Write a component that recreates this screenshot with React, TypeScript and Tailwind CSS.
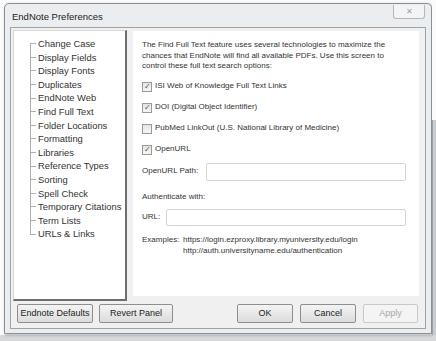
import React from 'react';

const items = [
    'Change Case',
    'Display Fields',
    'Display Fonts',
    'Duplicates',
    'EndNote Web',
    'Find Full Text',
    'Folder Locations',
    'Formatting',
    'Libraries',
    'Reference Types',
    'Sorting',
    'Spell Check',
    'Temporary Citations',
    'Term Lists',
    'URLs & Links',
];

function Check({ checked, label }: { checked: boolean; label: string }) {
    return (
        <div className="flex items-center gap-[3px] h-[12px]">
            <span className="w-[10px] h-[10px] border border-[#9a9a9a] bg-gradient-to-b from-[#e4e4e4] to-[#f6f6f6] flex items-center justify-center text-[8px] leading-none text-[#555]">
                {checked ? '✓' : ''}
            </span>
            <span>{label}</span>
        </div>
    );
}

function Btn({ label, w, disabled }: { label: string; w: string; disabled?: boolean }) {
    return (
        <div
            className={`${w} h-[19px] border rounded-[2px] flex items-center justify-center text-[9px] ${
                disabled
                    ? 'border-[#c8c8c8] bg-[#f4f4f4] text-[#a8a8a8]'
                    : 'border-[#8e8e8e] bg-gradient-to-b from-[#f4f4f4] to-[#dcdcdc] text-[#222]'
            }`}
        >
            {label}
        </div>
    );
}

export default function App() {
    return (
        <div className="w-[436px] h-[341px] bg-[#d6d8da] overflow-hidden relative" style={{ fontFamily: '"Liberation Sans", Arial, sans-serif' }}>
            <div className="flex h-[335px] bg-[#fbfbfb]">
                <div className="ml-[4px] mt-[3px] w-[428px] h-[331px] border border-[#8c8f92] rounded-t-[5px] bg-[#ebeef1] flex flex-col shadow-[1px_1px_3px_rgba(0,0,0,0.3)]">
                    <div className="h-[23px] flex items-start justify-between pl-[7px] pr-[6px]">
                        <span className="mt-[6px] text-[9.5px] text-[#222]">EndNote Preferences</span>
                        <div className="mt-[1px] w-[32px] h-[14px] border border-[#b4b8bc] border-t-0 rounded-b-[3px] bg-[#f3f4f5] flex items-center justify-center text-[8px] text-[#9aa0a6] leading-none">
                            ✕
                        </div>
                    </div>
                    <div className="mx-[5px] h-[302px] border border-[#9ea3a8] bg-[#f0f0f0] flex flex-col px-[2px] pt-[2px]">
                        <div className="flex h-[271px]">
                            <div className="w-[114px] h-[271px] bg-white border border-[#d8d8d8] border-r-[#6e6e6e] border-b-[#6e6e6e] border-r-2 border-b-2 relative">
                                <div className="absolute left-[16px] top-[12px] h-[191px] border-l border-[#b0b0b0]" />
                                <div className="pt-[6px] flex flex-col">
                                    {items.map((it) => (
                                        <div key={it} className="h-[13.6px] flex items-center text-[9.4px] text-[#333] leading-none whitespace-nowrap">
                                            <span className="w-[6px] ml-[16px] mr-[2px] border-t border-[#b0b0b0]" />
                                            {it}
                                        </div>
                                    ))}
                                </div>
                            </div>
                            <div className="ml-[6px] mt-[1px] w-[286px] h-[265px] bg-white text-[8px] text-[#333] leading-[10.5px] pl-[9px] pt-[9px]">
                                <p className="w-[250px]">
                                    The Find Full Text feature uses several technologies to maximize the chances that EndNote will find all available PDFs. Use this screen to control these full text search options:
                                </p>
                                <div className="mt-[9px] flex flex-col gap-[9px]">
                                    <Check checked label="ISI Web of Knowledge Full Text Links" />
                                    <Check checked label="DOI (Digital Object Identifier)" />
                                    <Check checked={false} label="PubMed LinkOut (U.S. National Library of Medicine)" />
                                    <Check checked label="OpenURL" />
                                </div>
                                <div className="mt-[7px] flex items-center">
                                    <span className="w-[64px]">OpenURL Path:</span>
                                    <div className="w-[200px] h-[18px] border border-[#d4d4d4] rounded-[2px] bg-white" />
                                </div>
                                <div className="mt-[11px]">Authenticate with:</div>
                                <div className="mt-[7px] flex items-center">
                                    <span className="w-[24px]">URL:</span>
                                    <div className="w-[240px] h-[17px] border border-[#d4d4d4] rounded-[2px] bg-white" />
                                </div>
                                <div className="mt-[9px] flex">
                                    <span className="w-[41px]">Examples:</span>
                                    <div className="flex flex-col">
                                        <span>https://login.ezproxy.library.myuniversity.edu/login</span>
                                        <span>http://auth.universityname.edu/authentication</span>
                                    </div>
                                </div>
                            </div>
                        </div>
                        <div className="mt-[3px] flex items-center pl-[4px] pr-[5px]">
                            <Btn label="Endnote Defaults" w="w-[76px]" />
                            <div className="ml-[6px]">
                                <Btn label="Revert Panel" w="w-[74px]" />
                            </div>
                            <div className="ml-auto flex gap-[7px]">
                                <Btn label="OK" w="w-[56px]" />
                                <Btn label="Cancel" w="w-[56px]" />
                                <Btn label="Apply" w="w-[55px]" disabled />
                            </div>
                        </div>
                    </div>
                </div>
                <div className="ml-auto w-[4px] h-full flex flex-col">
                    <div className="h-[120px] bg-[#fbfbfb]" />
                    <div className="flex-1 bg-[#c9ccd0] border-l border-[#9fa3a7]" />
                </div>
            </div>
        </div>
    );
}
